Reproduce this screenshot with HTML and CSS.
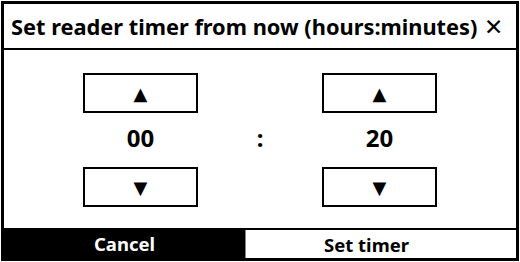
FILE: index.html
```html
<!DOCTYPE html>
<html>
<head>
<meta charset="utf-8">
<link rel="stylesheet" href="styles.css">
</head>
<body>
<div class="dialog">
  <div class="titlebar">
    <span class="title">Set reader timer from now (hours:minutes)</span>
    <span class="close">✕</span>
  </div>
  <div class="content">
    <div class="spinners">
      <div class="col">
        <div class="btn">▲</div>
        <div class="num">00</div>
        <div class="btn">▼</div>
      </div>
      <div class="colon">:</div>
      <div class="col">
        <div class="btn">▲</div>
        <div class="num">20</div>
        <div class="btn">▼</div>
      </div>
    </div>
  </div>
  <div class="actions">
    <div class="action cancel">Cancel</div>
    <div class="action set">Set timer</div>
  </div>
</div>
</body>
</html>
```
FILE: styles.css
```css
html, body {
  margin: 0;
  padding: 0;
  background: #fff;
}
body {
  font-family: "Noto Sans", "DejaVu Sans", sans-serif;
  color: #000;
  width: 520px;
  height: 262px;
  overflow: hidden;
}
.dialog {
  margin: 1px 0 0 1px;
  width: 518px;
  height: 260px;
  box-sizing: border-box;
  border: 3px solid #000;
  display: flex;
  flex-direction: column;
}
.titlebar {
  height: 44px;
  border-bottom: 2px solid #000;
  display: flex;
  align-items: center;
  justify-content: space-between;
  padding: 0 13px 0 7px;
}
.title {
  font-weight: bold;
  font-size: 21.8px;
  white-space: nowrap;
}
.close {
  font-size: 23px;
  font-weight: 300;
}
.content {
  flex: 1;
  display: flex;
  justify-content: center;
  padding-top: 23px;
}
.spinners {
  display: grid;
  grid-template-columns: 115px 124px 115px;
}
.col {
  display: flex;
  flex-direction: column;
}
.btn {
  height: 40px;
  box-sizing: border-box;
  border: 2px solid #000;
  display: flex;
  align-items: center;
  justify-content: center;
  font-size: 18px;
}
.num {
  height: 54px;
  box-sizing: border-box;
  padding-bottom: 5px;
  display: flex;
  align-items: center;
  justify-content: center;
  font-weight: bold;
  font-size: 24px;
}
.colon {
  height: 134px;
  box-sizing: border-box;
  padding-bottom: 5px;
  display: flex;
  align-items: center;
  justify-content: center;
  font-weight: bold;
  font-size: 24px;
}
.actions {
  height: 28px;
  display: flex;
  border-top: 2px solid #000;
}
.action {
  flex: 0 0 241px;
  display: flex;
  align-items: center;
  justify-content: center;
  font-weight: bold;
  font-size: 18.5px;
}
.cancel {
  background: #000;
  color: #fff;
  margin-top: -2px;
  height: 30px;
}
.set {
  border-left: 1px solid #888;
}
```
